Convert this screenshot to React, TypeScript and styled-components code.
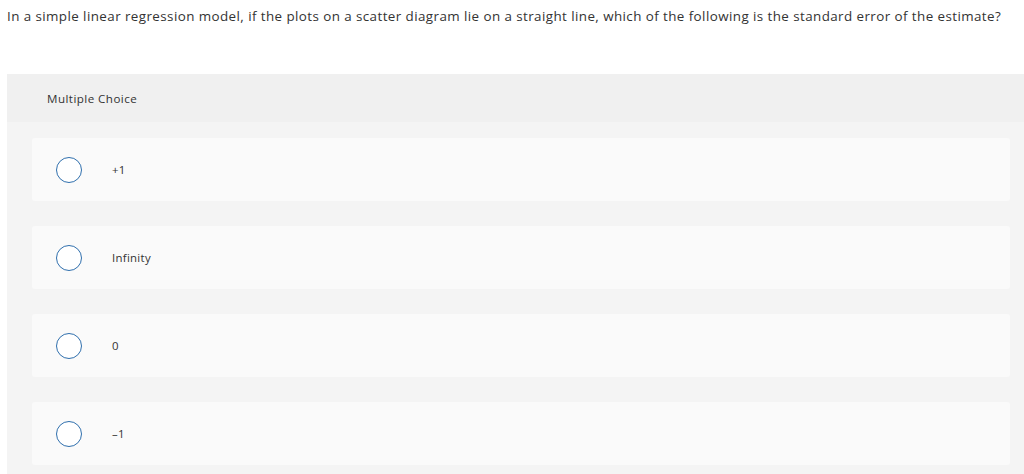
import React from "react";
import styled, { createGlobalStyle } from "styled-components";

const GlobalStyle = createGlobalStyle`
	body {
		margin: 0;
		background: #ffffff;
		font-family: "Open Sans", "Liberation Sans", sans-serif;
		color: #333333;
	}
`;

const Page = styled.div`
	padding: 7px 0 0 7px;
	width: 1024px;
	height: 474px;
	box-sizing: border-box;
	overflow: hidden;
`;

const Question = styled.p`
	margin: 0;
	font-size: 13.4px;
	letter-spacing: 0.42px;
	line-height: 18px;
	color: #333333;
	white-space: nowrap;
`;

const Panel = styled.div`
	margin-top: 49px;
	background-color: #f4f4f4;
	padding-bottom: 9px;
`;

const PanelHeader = styled.div`
	height: 48px;
	display: flex;
	align-items: center;
	padding-left: 40px;
	background-color: #f0f0f0;
	font-size: 11.6px;
	letter-spacing: 0.45px;
	color: #333333;
`;

const Choices = styled.div`
	display: flex;
	flex-direction: column;
	gap: 25px;
	padding: 16px 14px 0 25px;
`;

const Choice = styled.label`
	height: 63px;
	display: flex;
	align-items: center;
	gap: 30px;
	padding-left: 24px;
	background-color: #fafafa;
	border-radius: 3px;
	font-size: 11.4px;
	letter-spacing: 0.3px;
	color: #333333;
	cursor: pointer;
`;

const Radio = styled.span`
	width: 26px;
	height: 26px;
	box-sizing: border-box;
	border-radius: 50%;
	border: 1.5px solid #2f6fad;
	background-color: #ffffff;
	flex-shrink: 0;
`;

const options = ["+1", "Infinity", "0", "\u20131"];

export default function App() {
	return (
		<>
			<GlobalStyle />
			<Page>
				<Question>
					In a simple linear regression model, if the plots on a scatter diagram lie on a straight line, which of
					the following is the standard error of the estimate?
				</Question>
				<Panel>
					<PanelHeader>Multiple Choice</PanelHeader>
					<Choices>
						{options.map((o) => (
							<Choice key={o}>
								<Radio />
								<span>{o}</span>
							</Choice>
						))}
					</Choices>
				</Panel>
			</Page>
		</>
	);
}
